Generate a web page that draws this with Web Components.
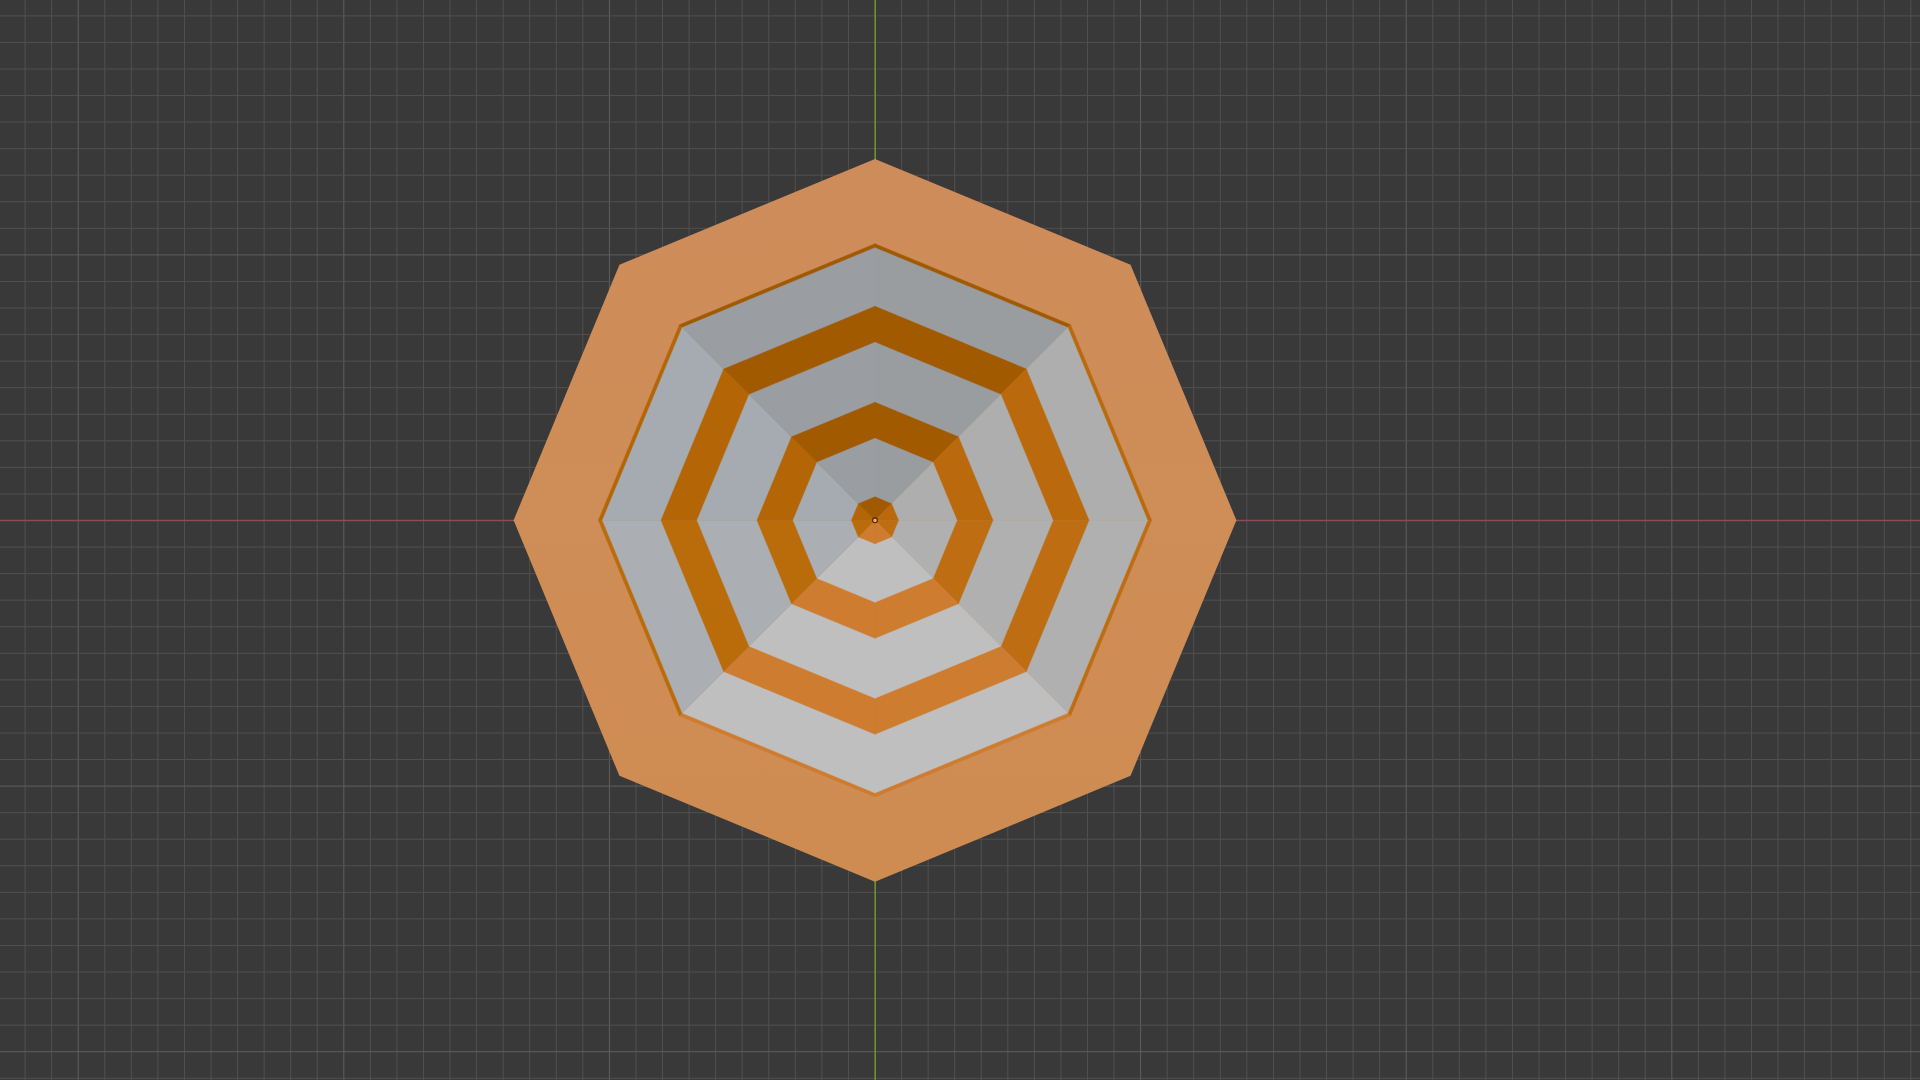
<!DOCTYPE html>
<html lang="en">
<head>
<meta charset="utf-8">
<title>Viewport</title>
<style>
  html, body { margin: 0; padding: 0; background: #393939; overflow: hidden; }
</style>
</head>
<body>
<viewport-3d>
  <floor-grid></floor-grid>
  <ngon-rings></ngon-rings>
</viewport-3d>
<script>
const NS = 'http://www.w3.org/2000/svg';
const W = 1920, H = 1080, CX = 875, CY = 520;

function el(name, attrs, parent) {
  const n = document.createElementNS(NS, name);
  for (const k in attrs) n.setAttribute(k, attrs[k]);
  if (parent) parent.appendChild(n);
  return n;
}

class Viewport3D extends HTMLElement {
  constructor() {
    super();
    this.attachShadow({ mode: 'open' }).innerHTML = `
      <style>
        :host { display: grid; width: 1920px; height: 1080px; background: #393939; overflow: hidden; filter: blur(0.35px); }
        ::slotted(*) { grid-area: 1 / 1; }
      </style>
      <slot></slot>`;
  }
}

class FloorGrid extends HTMLElement {
  constructor() {
    super();
    const root = this.attachShadow({ mode: 'open' });
    root.innerHTML = `<style>:host { display: block; width: 1920px; height: 1080px; } svg { display: block; }</style>`;
    const svg = el('svg', { width: W, height: H, viewBox: `0 0 ${W} ${H}` }, root);
    const step = 26.56;
    const minor = '#505050', major = '#5f5f5f';
    for (let i = -34; i <= 40; i++) {
      if (i === 0) continue;
      const x = CX + i * step;
      el('line', { x1: x, y1: 0, x2: x, y2: H, stroke: i % 10 === 0 ? major : minor, 'stroke-width': 1 }, svg);
    }
    for (let i = -20; i <= 21; i++) {
      if (i === 0) continue;
      const y = CY + 0.5 + i * step;
      el('line', { x1: 0, y1: y, x2: W, y2: y, stroke: i % 10 === 0 ? major : minor, 'stroke-width': 1 }, svg);
    }
    el('line', { x1: 0, y1: CY + 0.5, x2: W, y2: CY + 0.5, stroke: '#8e4a58', 'stroke-width': 1.5 }, svg);
    el('line', { x1: CX + 0.2, y1: 0, x2: CX + 0.2, y2: H, stroke: '#6f9130', 'stroke-width': 1.6 }, svg);
  }
}

class NgonRings extends HTMLElement {
  constructor() {
    super();
    const root = this.attachShadow({ mode: 'open' });
    root.innerHTML = `<style>:host { display: block; width: 1920px; height: 1080px; } svg { display: block; }</style>`;
    const svg = el('svg', { width: W, height: H, viewBox: `0 0 ${W} ${H}` }, root);
    const defs = el('defs', {}, svg);
    const grad = el('linearGradient', { id: 'outerFace', x1: 0, y1: 0, x2: 0, y2: 1 }, defs);
    el('stop', { offset: 0, 'stop-color': '#cd8c5a' }, grad);
    el('stop', { offset: 0.5, 'stop-color': '#cf8d57' }, grad);
    el('stop', { offset: 1, 'stop-color': '#cf8c51' }, grad);

    const CYY = CY + 0.3;
    const pt = (r, k) => {
      const a = k * Math.PI / 4;
      return [(CX + r * Math.sin(a)).toFixed(2), (CYY - r * Math.cos(a)).toFixed(2)].join(',');
    };
    const outerPts = [0,1,2,3,4,5,6,7].map(k => pt(361.4, k)).join(' ');
    el('polygon', { points: outerPts, fill: 'url(#outerFace)' }, svg);

    // wedge order, clockwise from the top vertex: TR, RU, RD, BR, BL, LD, LU, TL
    const hot  = ['#a25a00','#ba6a0c','#be6d12','#ce7c30','#ce7c30','#ba6b0a','#b46606','#a25a00'];
    const gray = ['#999d9f','#aeaeae','#b0b0b0','#bfbfbf','#bfbfbf','#abaeb2','#a6abb2','#9a9ea2'];
    const bands = [
      [276.6, hot], [272.6, gray], [214, hot],
      [178, gray], [118, hot], [82, gray], [23.5, hot]
    ];
    for (const [r, colours] of bands) {
      const g = el('g', {}, svg);
      colours.forEach((c, k) => {
        el('polygon', {
          points: `${CX},${CYY} ${pt(r, k)} ${pt(r, k + 1)}`,
          fill: c, stroke: c, 'stroke-width': 0.4, 'stroke-linejoin': 'round'
        }, g);
      });
    }
    el('circle', { cx: CX, cy: CYY, r: 2.4, fill: '#f2ad62', stroke: '#4a2408', 'stroke-width': 1.1 }, svg);
  }
}

customElements.define('viewport-3d', Viewport3D);
customElements.define('floor-grid', FloorGrid);
customElements.define('ngon-rings', NgonRings);
</script>
</body>
</html>
